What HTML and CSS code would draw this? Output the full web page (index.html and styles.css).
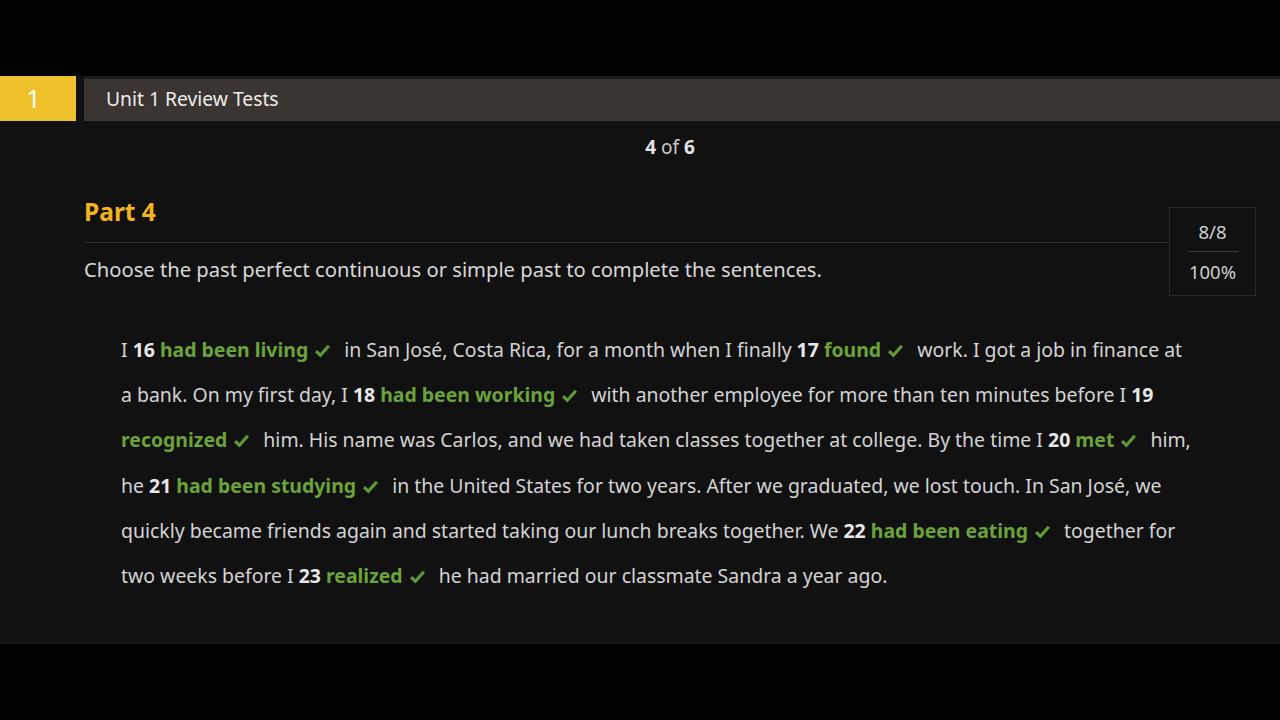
FILE: index.html
```html
<!DOCTYPE html>
<html>
<head>
<meta charset="utf-8">
<link rel="stylesheet" href="styles.css">
</head>
<body>
<div class="page">
  <div class="header">
    <div class="num">1</div>
    <div class="title">Unit 1 Review Tests</div>
  </div>
  <div class="pager"><b>4</b> of <b>6</b></div>
  <div class="part">
    <div class="part-main">
      <h2 class="part-title">Part 4</h2>
      <p class="instr">Choose the past perfect continuous or simple past to complete the sentences.</p>
    </div>
    <div class="score">
      <div class="score-top">8/8</div>
      <div class="score-bot">100%</div>
    </div>
  </div>
  <p class="passage">I <b class="n">16</b> <span class="ans">had been living<svg class="chk" viewBox="0 0 16 14"><path d="M2 7.5 L6 11.5 L14 2.5"/></svg></span> in San José, Costa Rica, for a month when I finally <b class="n">17</b> <span class="ans">found<svg class="chk" viewBox="0 0 16 14"><path d="M2 7.5 L6 11.5 L14 2.5"/></svg></span> work. I got a job in finance at a bank. On my first day, I <b class="n">18</b> <span class="ans">had been working<svg class="chk" viewBox="0 0 16 14"><path d="M2 7.5 L6 11.5 L14 2.5"/></svg></span> with another employee for more than ten minutes before I <b class="n">19</b> <span class="ans">recognized<svg class="chk" viewBox="0 0 16 14"><path d="M2 7.5 L6 11.5 L14 2.5"/></svg></span> him. His name was Carlos, and we had taken classes together at college. By the time I <b class="n">20</b> <span class="ans">met<svg class="chk" viewBox="0 0 16 14"><path d="M2 7.5 L6 11.5 L14 2.5"/></svg></span> him, he <b class="n">21</b> <span class="ans">had been studying<svg class="chk" viewBox="0 0 16 14"><path d="M2 7.5 L6 11.5 L14 2.5"/></svg></span> in the United States for two years. After we graduated, we lost touch. In San José, we quickly became friends again and started taking our lunch breaks together. We <b class="n">22</b> <span class="ans">had been eating<svg class="chk" viewBox="0 0 16 14"><path d="M2 7.5 L6 11.5 L14 2.5"/></svg></span> together for two weeks before I <b class="n">23</b> <span class="ans">realized<svg class="chk" viewBox="0 0 16 14"><path d="M2 7.5 L6 11.5 L14 2.5"/></svg></span> he had married our classmate Sandra a year ago.</p>
</div>
</body>
</html>
```
FILE: styles.css
```css
* { box-sizing: border-box; }
html, body { margin: 0; padding: 0; background: #000; }
body {
  font-family: "Noto Sans", "Open Sans", sans-serif;
  color: #d8d8d8;
  height: 720px;
  padding-top: 76px;
}
.page {
  background: #111;
  height: 568px;
  border-bottom: 1px solid #1c1c1c;
}
.header {
  display: flex;
  height: 45px;
  gap: 8px;
}
.num {
  width: 76px;
  background: #efc12a;
  color: #fff;
  font-size: 26px;
  line-height: 45px;
  padding-left: 26px;
}
.title {
  flex: 1;
  background: #3a3530;
  border-top: 3px solid #1e1c1a;
  color: #ededed;
  font-size: 19.3px;
  line-height: 40px;
  padding-left: 22px;
}
.pager {
  text-align: center;
  font-size: 19px;
  color: #c8c8c8;
  margin-top: 12px;
  padding-left: 60px;
  line-height: 28px;
}
.pager b { color: #e4e4e4; }
.part {
  display: flex;
  margin: 36px 24px 0 84px;
  align-items: flex-start;
}
.part-main { flex: 1; }
.part-title {
  margin: 0;
  font-size: 24.5px;
  font-weight: 700;
  color: #f2b31f;
  line-height: 30px;
  padding-bottom: 15px;
  border-bottom: 1px solid #2e2e2e;
}
.instr {
  margin: 13px 0 0;
  font-size: 20.2px;
  line-height: 26px;
  color: #d8d8d8;
}
.score {
  width: 87px;
  margin-top: 10px;
  border: 1px solid #2a2a2a;
  padding: 0 17px;
  text-align: center;
  font-size: 18.5px;
  color: #cfcfcf;
}
.score-top {
  line-height: 26px;
  padding-top: 11px;
  padding-bottom: 6px;
  border-bottom: 1px solid #3a3a3a;
}
.score-bot {
  line-height: 26px;
  padding-top: 7px;
  padding-bottom: 10px;
}
.passage {
  margin: 31px 85px 0 121px;
  font-size: 19.45px;
  line-height: 45.2px;
  color: #d4d4d4;
}
.n { color: #e8e8e8; font-weight: 700; }
.ans {
  color: #6aa33a;
  font-weight: 700;
  margin-right: 8px;
}
.chk {
  width: 17px;
  height: 15px;
  margin-left: 6px;
  vertical-align: -1px;
  fill: none;
  stroke: #5e9a34;
  stroke-width: 3;
}
```
